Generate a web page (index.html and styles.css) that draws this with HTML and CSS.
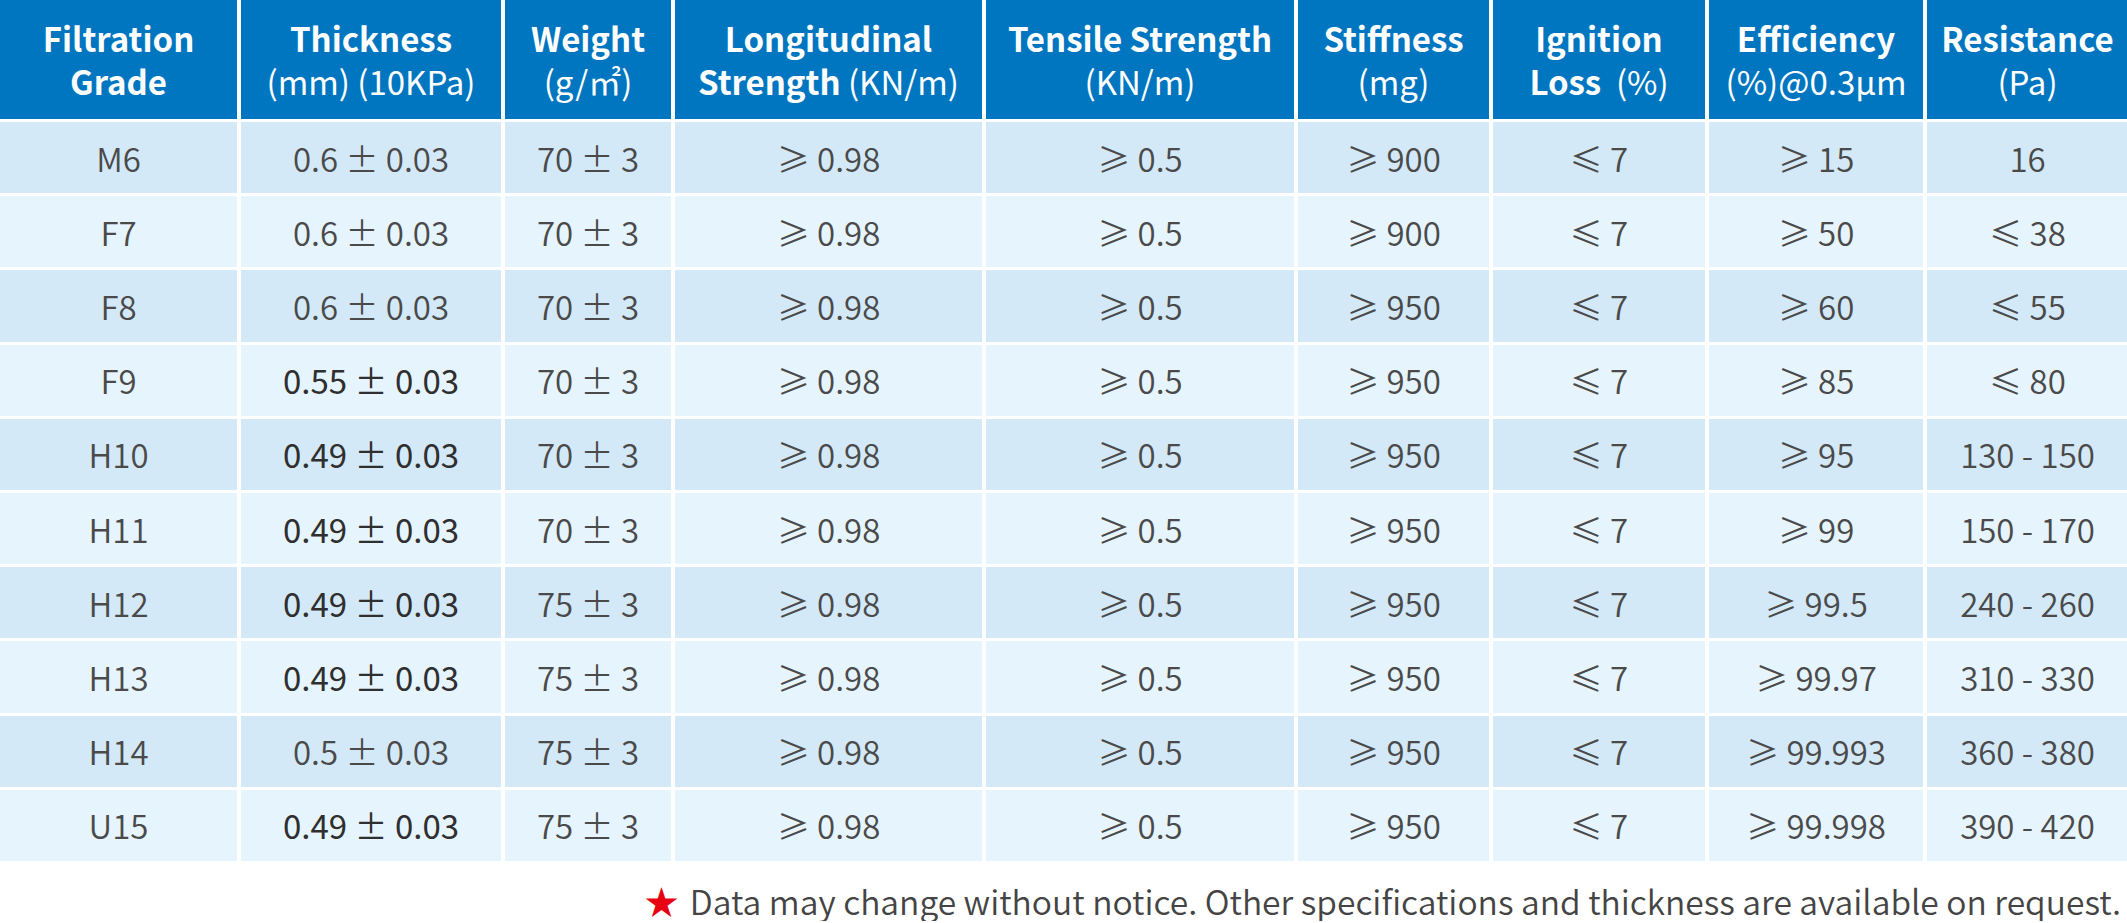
FILE: index.html
```html
<!DOCTYPE html>
<html lang="en">
<head>
<meta charset="utf-8">
<title>Filtration Media Specifications</title>
<link rel="stylesheet" href="styles.css">
</head>
<body>
<div class="spec">
  <div class="grid">
    <div class="hcell"><span class="b">Filtration</span><span class="b">Grade</span></div>
    <div class="hcell"><span class="b">Thickness</span><span>(mm) (10KPa)</span></div>
    <div class="hcell"><span class="b">Weight</span><span>(g/㎡)</span></div>
    <div class="hcell"><span class="b">Longitudinal</span><span><b>Strength</b> (KN/m)</span></div>
    <div class="hcell"><span class="b">Tensile Strength</span><span>(KN/m)</span></div>
    <div class="hcell"><span class="b">Stiffness</span><span>(mg)</span></div>
    <div class="hcell"><span class="b">Ignition</span><span><b>Loss</b>&nbsp; (%)</span></div>
    <div class="hcell"><span class="b">Efficiency</span><span>(%)@0.3μm</span></div>
    <div class="hcell"><span class="b">Resistance</span><span>(Pa)</span></div>

    <div class="cell odd">M6</div><div class="cell odd">0.6 ± 0.03</div><div class="cell odd">70 ± 3</div><div class="cell odd">≥ 0.98</div><div class="cell odd">≥ 0.5</div><div class="cell odd">≥ 900</div><div class="cell odd">≤ 7</div><div class="cell odd">≥ 15</div><div class="cell odd">16</div>

    <div class="cell even">F7</div><div class="cell even">0.6 ± 0.03</div><div class="cell even">70 ± 3</div><div class="cell even">≥ 0.98</div><div class="cell even">≥ 0.5</div><div class="cell even">≥ 900</div><div class="cell even">≤ 7</div><div class="cell even">≥ 50</div><div class="cell even">≤ 38</div>

    <div class="cell odd">F8</div><div class="cell odd">0.6 ± 0.03</div><div class="cell odd">70 ± 3</div><div class="cell odd">≥ 0.98</div><div class="cell odd">≥ 0.5</div><div class="cell odd">≥ 950</div><div class="cell odd">≤ 7</div><div class="cell odd">≥ 60</div><div class="cell odd">≤ 55</div>

    <div class="cell even">F9</div><div class="cell even dark">0.55 ± 0.03</div><div class="cell even">70 ± 3</div><div class="cell even">≥ 0.98</div><div class="cell even">≥ 0.5</div><div class="cell even">≥ 950</div><div class="cell even">≤ 7</div><div class="cell even">≥ 85</div><div class="cell even">≤ 80</div>

    <div class="cell odd">H10</div><div class="cell odd dark">0.49 ± 0.03</div><div class="cell odd">70 ± 3</div><div class="cell odd">≥ 0.98</div><div class="cell odd">≥ 0.5</div><div class="cell odd">≥ 950</div><div class="cell odd">≤ 7</div><div class="cell odd">≥ 95</div><div class="cell odd">130 - 150</div>

    <div class="cell even">H11</div><div class="cell even dark">0.49 ± 0.03</div><div class="cell even">70 ± 3</div><div class="cell even">≥ 0.98</div><div class="cell even">≥ 0.5</div><div class="cell even">≥ 950</div><div class="cell even">≤ 7</div><div class="cell even">≥ 99</div><div class="cell even">150 - 170</div>

    <div class="cell odd">H12</div><div class="cell odd dark">0.49 ± 0.03</div><div class="cell odd">75 ± 3</div><div class="cell odd">≥ 0.98</div><div class="cell odd">≥ 0.5</div><div class="cell odd">≥ 950</div><div class="cell odd">≤ 7</div><div class="cell odd">≥ 99.5</div><div class="cell odd">240 - 260</div>

    <div class="cell even">H13</div><div class="cell even dark">0.49 ± 0.03</div><div class="cell even">75 ± 3</div><div class="cell even">≥ 0.98</div><div class="cell even">≥ 0.5</div><div class="cell even">≥ 950</div><div class="cell even">≤ 7</div><div class="cell even">≥ 99.97</div><div class="cell even">310 - 330</div>

    <div class="cell odd">H14</div><div class="cell odd">0.5 ± 0.03</div><div class="cell odd">75 ± 3</div><div class="cell odd">≥ 0.98</div><div class="cell odd">≥ 0.5</div><div class="cell odd">≥ 950</div><div class="cell odd">≤ 7</div><div class="cell odd">≥ 99.993</div><div class="cell odd">360 - 380</div>

    <div class="cell even">U15</div><div class="cell even dark">0.49 ± 0.03</div><div class="cell even">75 ± 3</div><div class="cell even">≥ 0.98</div><div class="cell even">≥ 0.5</div><div class="cell even">≥ 950</div><div class="cell even">≤ 7</div><div class="cell even">≥ 99.998</div><div class="cell even">390 - 420</div>
  </div>
  <p class="note"><span class="star">★</span> Data may change without notice. Other specifications and thickness are available on request.</p>
</div>
</body>
</html>
```

FILE: styles.css
```css
html, body {
  margin: 0;
  padding: 0;
  background: #ffffff;
}

body {
  font-family: "Noto Sans CJK SC", "Noto Sans", sans-serif;
  color: #4a4a4a;
}

.grid {
  display: grid;
  grid-template-columns: 237px 260px 166px 307px 308px 191px 212px 214px 201px;
  grid-template-rows: 119px;
  grid-auto-rows: 71.2px;
  column-gap: 4px;
  row-gap: 3px;
}

.hcell {
  background: #0076c0;
  color: #ffffff;
  display: flex;
  flex-direction: column;
  align-items: center;
  justify-content: center;
  font-size: 33px;
  line-height: 43px;
  font-weight: 400;
  text-align: center;
  white-space: nowrap;
}

.hcell > span {
  display: block;
  height: 43px;
}

.hcell .b,
.hcell b {
  font-weight: 700;
}

.cell {
  display: flex;
  align-items: center;
  justify-content: center;
  font-size: 33px;
  font-weight: 350;
  white-space: nowrap;
}

.cell.odd {
  background: #d3e9f8;
}

.cell.even {
  background: #e6f4fd;
}

.cell.dark {
  color: #2f2f2f;
  font-weight: 400;
}

.note {
  margin: 0;
  padding: 20px 6px 0 0;
  text-align: right;
  font-size: 33.6px;
  line-height: 40px;
  font-weight: 350;
  color: #444444;
}

.star {
  color: #e60012;
  margin-right: 4px;
}
```
